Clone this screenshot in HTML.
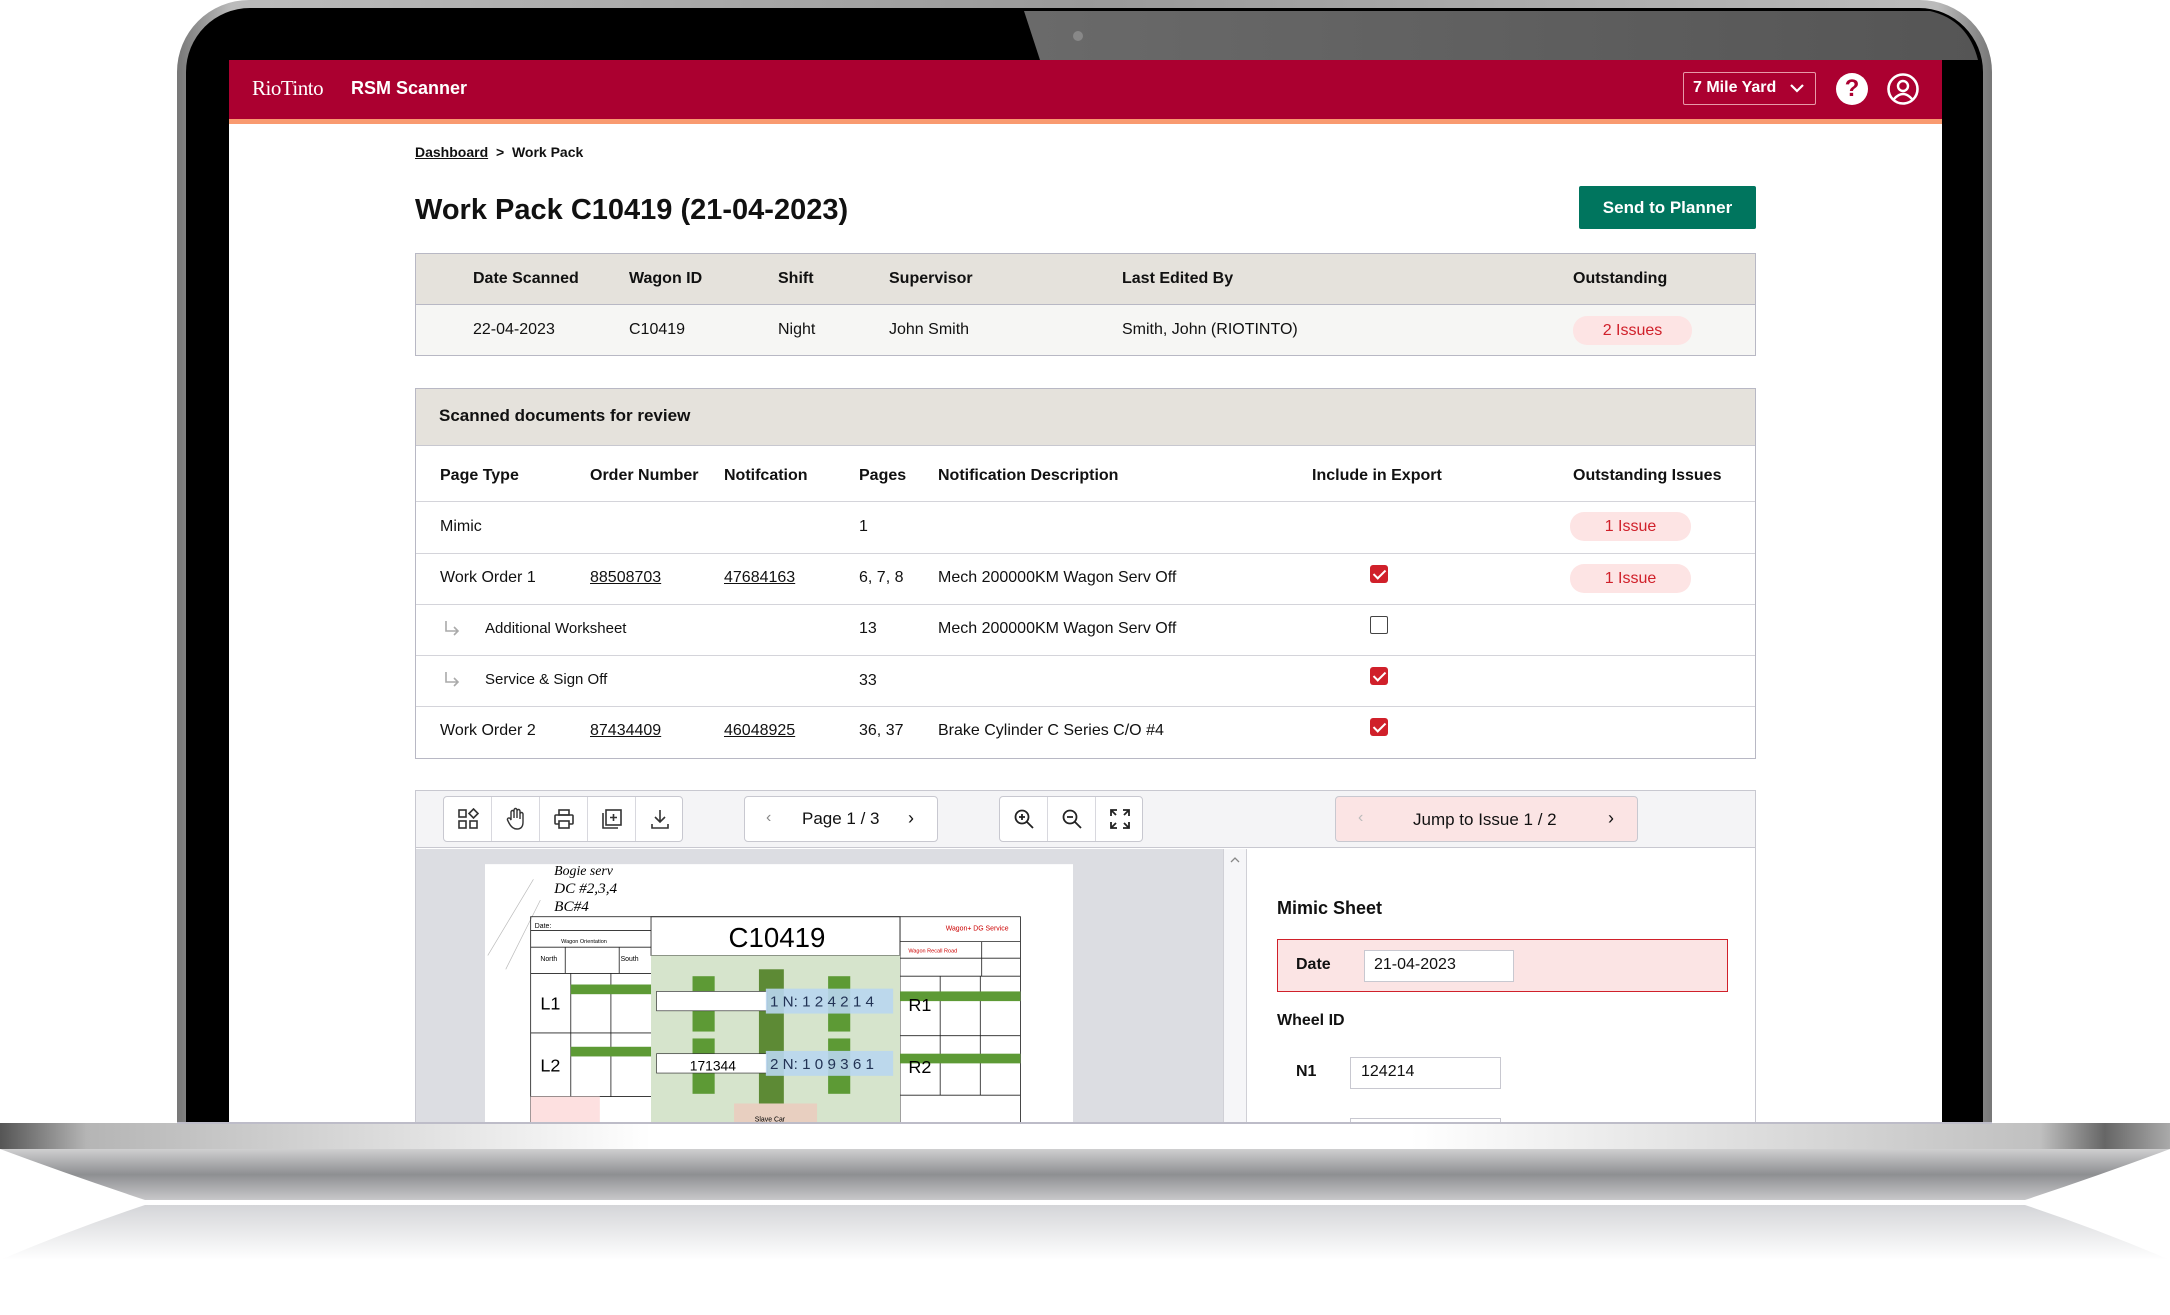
<!DOCTYPE html>
<html><head><meta charset="utf-8"><style>
*{box-sizing:border-box;margin:0;padding:0}
body{width:2170px;height:1315px;position:relative;background:#fff;font-family:"Liberation Sans",sans-serif;color:#111;overflow:hidden}
.a{position:absolute}
.t{position:absolute;white-space:nowrap;font-size:16px}
.b{font-weight:bold}
.badge{position:absolute;background:#fde4e4;color:#d0202a;border-radius:14px;font-size:16px;text-align:center;line-height:29px;height:29px}
.u{text-decoration:underline}
.cb{position:absolute;width:18px;height:18px;border-radius:3px;background:#d0202a}
.cb:after{content:"";position:absolute;left:6px;top:2px;width:5px;height:10px;border:solid #fff;border-width:0 2px 2px 0;transform:rotate(45deg)}
.grp{position:absolute;border:1px solid #c8c8d0;border-radius:4px;background:#fff;height:46px;top:796px}
.ic{position:absolute;top:0;height:44px;width:48px;border-right:1px solid #d8d8de;display:flex;align-items:center;justify-content:center}
</style></head><body>
<!-- laptop outer -->
<div class="a" style="left:177px;top:0;width:1815px;height:1140px;border-radius:72px 72px 0 0;background:linear-gradient(90deg,#777,#bbb 3%,#999 50%,#bbb 97%,#777)"></div>
<div class="a" style="left:186px;top:8px;width:1797px;height:1130px;border-radius:64px 64px 0 0;background:#000"></div>
<svg class="a" style="left:0;top:0" width="2170" height="70"><defs><linearGradient id="g1" x1="0" x2="1"><stop offset="0" stop-color="#6a6a6a"/><stop offset="1" stop-color="#555"/></linearGradient></defs><path d="M1024 11 L1930 11 Q1968 20 1978 60 L1040 60 Z" fill="url(#g1)"/><circle cx="1078" cy="36" r="5" fill="#888"/></svg>
<!-- screen -->
<div class="a" style="left:229px;top:60px;width:1713px;height:1063px;background:#fff;overflow:hidden">
 <div class="a" style="left:0;top:0;width:1713px;height:59px;background:#ab0030"></div>
 <div class="a" style="left:0;top:59px;width:1713px;height:5px;background:#f99a70"></div>
</div>
<div class="t" style="left:252px;top:76px;color:#fff;font-family:'Liberation Serif',serif;font-size:21px;letter-spacing:-0.5px">RioTinto</div>
<div class="t b" style="left:351px;top:78px;color:#fff;font-size:18px">RSM Scanner</div>
<div class="a" style="left:1683px;top:72px;width:133px;height:33px;border:1px solid #e79aa8;border-radius:2px"></div>
<div class="t b" style="left:1693px;top:79px;color:#fff;font-size:16px">7 Mile Yard</div>
<svg class="a" style="left:1788px;top:80px" width="18" height="16"><path d="M3 5 L9 11 L15 5" stroke="#fff" stroke-width="2.2" fill="none"/></svg>
<div class="a" style="left:1836px;top:73px;width:32px;height:32px;border-radius:50%;background:#fff;color:#ab0030;font-weight:bold;font-size:24px;text-align:center;line-height:32px">?</div>
<svg class="a" style="left:1886px;top:72px" width="34" height="34"><circle cx="17" cy="17" r="14.5" stroke="#fff" stroke-width="2.6" fill="none"/><circle cx="17" cy="14" r="5" stroke="#fff" stroke-width="2.4" fill="none"/><path d="M8 27 Q17 17 26 27" stroke="#fff" stroke-width="2.4" fill="none"/></svg>

<div class="t b u" style="left:415px;top:144px;font-size:14px">Dashboard</div>
<div class="t b" style="left:496px;top:144px;font-size:14px">&gt;&nbsp; Work Pack</div>
<div class="t b" style="left:415px;top:194px;font-size:29px">Work Pack C10419 (21-04-2023)</div>
<div class="a" style="left:1579px;top:186px;width:177px;height:43px;background:#00755e;border-radius:2px;color:#fff;font-size:17px;font-weight:bold;text-align:center;line-height:43px">Send to Planner</div>

<!-- table 1 -->
<div class="a" style="left:415px;top:253px;width:1341px;height:103px;border:1px solid #b8b8c4;background:#f6f6f4"></div>
<div class="a" style="left:416px;top:254px;width:1339px;height:51px;background:#e5e2dc;border-bottom:1px solid #b8b8c4"></div>
<div class="t b" style="left:473px;top:270px">Date Scanned</div>
<div class="t b" style="left:629px;top:270px">Wagon ID</div>
<div class="t b" style="left:778px;top:270px">Shift</div>
<div class="t b" style="left:889px;top:270px">Supervisor</div>
<div class="t b" style="left:1122px;top:270px">Last Edited By</div>
<div class="t b" style="left:1573px;top:270px">Outstanding</div>
<div class="t" style="left:473px;top:321px">22-04-2023</div>
<div class="t" style="left:629px;top:321px">C10419</div>
<div class="t" style="left:778px;top:321px">Night</div>
<div class="t" style="left:889px;top:321px">John Smith</div>
<div class="t" style="left:1122px;top:321px">Smith, John (RIOTINTO)</div>
<div class="badge" style="left:1573px;top:316px;width:119px">2 Issues</div>

<!-- table 2 -->
<div class="a" style="left:415px;top:388px;width:1341px;height:371px;border:1px solid #b8b8c4;background:#fff"></div>
<div class="a" style="left:416px;top:389px;width:1339px;height:57px;background:#e5e2dc;border-bottom:1px solid #c8c8d0"></div>
<div class="t b" style="left:439px;top:406px;font-size:17px">Scanned documents for review</div>
<div class="t b" style="left:440px;top:467px">Page Type</div>
<div class="t b" style="left:590px;top:467px">Order Number</div>
<div class="t b" style="left:724px;top:467px">Notifcation</div>
<div class="t b" style="left:859px;top:467px">Pages</div>
<div class="t b" style="left:938px;top:467px">Notification Description</div>
<div class="t b" style="left:1312px;top:467px">Include in Export</div>
<div class="t b" style="left:1573px;top:467px">Outstanding Issues</div>
<div class="a" style="left:416px;top:501px;width:1339px;height:1px;background:#d4d4da"></div>
<div class="a" style="left:416px;top:553px;width:1339px;height:1px;background:#d4d4da"></div>
<div class="a" style="left:416px;top:604px;width:1339px;height:1px;background:#d4d4da"></div>
<div class="a" style="left:416px;top:655px;width:1339px;height:1px;background:#d4d4da"></div>
<div class="a" style="left:416px;top:706px;width:1339px;height:1px;background:#d4d4da"></div>
<div class="t" style="left:440px;top:518px">Mimic</div>
<div class="t" style="left:859px;top:518px">1</div>
<div class="badge" style="left:1570px;top:512px;width:121px">1 Issue</div>
<div class="t" style="left:440px;top:569px">Work Order 1</div>
<div class="t u" style="left:590px;top:569px">88508703</div>
<div class="t u" style="left:724px;top:569px">47684163</div>
<div class="t" style="left:859px;top:569px">6, 7, 8</div>
<div class="t" style="left:938px;top:569px">Mech 200000KM Wagon Serv Off</div>
<div class="cb" style="left:1370px;top:565px"></div>
<div class="badge" style="left:1570px;top:564px;width:121px">1 Issue</div>
<svg class="a" style="left:443px;top:619px" width="18" height="18"><path d="M3 2 V12 H15 M11 8 L15 12 L11 16" stroke="#aaa" stroke-width="1.6" fill="none"/></svg>
<div class="t" style="left:485px;top:620px;font-size:15px">Additional Worksheet</div>
<div class="t" style="left:859px;top:620px">13</div>
<div class="t" style="left:938px;top:620px">Mech 200000KM Wagon Serv Off</div>
<div class="a" style="left:1370px;top:616px;width:18px;height:18px;border:1.5px solid #444;border-radius:2px"></div>
<svg class="a" style="left:443px;top:670px" width="18" height="18"><path d="M3 2 V12 H15 M11 8 L15 12 L11 16" stroke="#aaa" stroke-width="1.6" fill="none"/></svg>
<div class="t" style="left:485px;top:671px;font-size:15px">Service &amp; Sign Off</div>
<div class="t" style="left:859px;top:672px">33</div>
<div class="cb" style="left:1370px;top:667px"></div>
<div class="t" style="left:440px;top:722px">Work Order 2</div>
<div class="t u" style="left:590px;top:722px">87434409</div>
<div class="t u" style="left:724px;top:722px">46048925</div>
<div class="t" style="left:859px;top:722px">36, 37</div>
<div class="t" style="left:938px;top:722px">Brake Cylinder C Series C/O #4</div>
<div class="cb" style="left:1370px;top:718px"></div>

<!-- viewer -->
<div class="a" style="left:415px;top:790px;width:1341px;height:340px;border:1px solid #c8c8d0;background:#fff"></div>
<div class="a" style="left:416px;top:791px;width:1339px;height:57px;background:#f4f4f6;border-bottom:1px solid #c8c8d0"></div>
<div class="grp" style="left:443px;width:240px">
 <div class="ic" style="left:0"><svg width="22" height="22"><rect x="2" y="2" width="7" height="7" fill="none" stroke="#333" stroke-width="1.6"/><rect x="2" y="13" width="7" height="7" fill="none" stroke="#333" stroke-width="1.6"/><rect x="13" y="13" width="7" height="7" fill="none" stroke="#333" stroke-width="1.6"/><path d="M16.5 1 L21 5.5 L16.5 10 L12 5.5Z" fill="none" stroke="#333" stroke-width="1.6"/></svg></div>
 <div class="ic" style="left:48px"><svg width="22" height="24"><path d="M6 13 V5 a1.5 1.5 0 0 1 3 0 V11 V3 a1.5 1.5 0 0 1 3 0 V11 V4 a1.5 1.5 0 0 1 3 0 V12 V7 a1.5 1.5 0 0 1 3 0 V15 Q18 22 12 22 Q7 22 4 16 L2.5 13 a1.5 1.5 0 0 1 3-1Z" fill="none" stroke="#333" stroke-width="1.4"/></svg></div>
 <div class="ic" style="left:96px"><svg width="22" height="22"><rect x="6" y="2" width="10" height="5" fill="none" stroke="#333" stroke-width="1.6"/><rect x="2" y="7" width="18" height="9" rx="1" fill="none" stroke="#333" stroke-width="1.6"/><rect x="6" y="13" width="10" height="7" fill="#fff" stroke="#333" stroke-width="1.6"/></svg></div>
 <div class="ic" style="left:144px"><svg width="22" height="22"><rect x="5" y="2" width="15" height="15" fill="none" stroke="#333" stroke-width="1.6"/><path d="M2 5 V20 H17 M12.5 6 V13 M9 9.5 H16" stroke="#333" stroke-width="1.6" fill="none"/></svg></div>
 <div class="ic" style="left:192px;border:none"><svg width="22" height="22"><path d="M11 2 V14 M6 9 L11 14 L16 9 M3 16 V20 H19 V16" stroke="#333" stroke-width="1.6" fill="none"/></svg></div>
</div>
<div class="grp" style="left:744px;width:194px">
 <div class="t" style="left:21px;top:12px;color:#888">&#8249;</div>
 <div class="t" style="left:57px;top:12px;font-size:17px">Page 1 / 3</div>
 <div class="t" style="left:163px;top:11px;font-size:18px">&#8250;</div>
</div>
<div class="grp" style="left:999px;width:144px">
 <div class="ic" style="left:0"><svg width="22" height="22"><circle cx="9" cy="9" r="6.5" fill="none" stroke="#222" stroke-width="1.8"/><path d="M14 14 L20 20 M9 6 V12 M6 9 H12" stroke="#222" stroke-width="1.8"/></svg></div>
 <div class="ic" style="left:48px"><svg width="22" height="22"><circle cx="9" cy="9" r="6.5" fill="none" stroke="#222" stroke-width="1.8"/><path d="M14 14 L20 20 M6 9 H12" stroke="#222" stroke-width="1.8"/></svg></div>
 <div class="ic" style="left:96px;border:none"><svg width="22" height="22"><path d="M2 8 V2 H8 M14 2 H20 V8 M20 14 V20 H14 M8 20 H2 V14 M2 2 L7 7 M20 2 L15 7 M20 20 L15 15 M2 20 L7 15" stroke="#222" stroke-width="1.8" fill="none"/></svg></div>
</div>
<div class="grp" style="left:1335px;width:303px;background:#fbe4e4">
 <div class="t" style="left:22px;top:12px;color:#bbb">&#8249;</div>
 <div class="t" style="left:77px;top:13px;font-size:17px">Jump to Issue 1 / 2</div>
 <div class="t" style="left:272px;top:11px;font-size:18px">&#8250;</div>
</div>
<div class="a" style="left:416px;top:849px;width:807px;height:280px;background:#dcdde2"></div>
<div class="a" style="left:1223px;top:849px;width:24px;height:280px;background:#f6f6f8;border-left:1px solid #d0d0d6;border-right:1px solid #d0d0d6"></div>
<svg class="a" style="left:1228px;top:854px" width="14" height="12"><path d="M3 8 L7 4 L11 8" stroke="#888" stroke-width="1.3" fill="none"/></svg>
<svg class="a" style="left:485px;top:864px" width="588" height="259" viewBox="350 624 425 187">
 <rect x="350" y="624" width="425" height="187" fill="#fff"/>
 <path d="M352 690 L385 635 M365 700 L390 650" stroke="#bbb" stroke-width="0.5"/>
 <text x="400" y="632" font-family="Liberation Serif" font-style="italic" font-size="10">Bogie serv</text>
 <text x="400" y="645" font-family="Liberation Serif" font-style="italic" font-size="11">DC #2,3,4</text>
 <text x="400" y="658" font-family="Liberation Serif" font-style="italic" font-size="11">BC#4</text>
 <g fill="none" stroke="#222" stroke-width="0.6">
  <rect x="383" y="662" width="354" height="149"/>
  <rect x="470" y="662" width="180" height="28"/>
  <path d="M383 672 H470 M383 684 H470 M383 703 H470 M383 746 H470 M383 792 H470 M412 703 V792 M441 703 V792 M650 662 V811 M650 680 H737 M650 692 H737 M650 705 H737 M650 748 H737 M650 791 H737 M679 705 V791 M708 705 V791 M709 680 V705 M408 684 V703 M447 684 V703"/>
 </g>
 <rect x="470" y="690" width="180" height="121" fill="#d6e4cc"/>
 <rect x="548" y="700" width="18" height="111" fill="#5d8a35"/>
 <g fill="#5d9a35"><rect x="500" y="705" width="16" height="40"/><rect x="598" y="705" width="16" height="40"/><rect x="500" y="750" width="16" height="40"/><rect x="598" y="750" width="16" height="40"/>
 <rect x="412" y="711" width="58" height="7"/><rect x="412" y="756" width="58" height="7"/><rect x="650" y="716" width="87" height="7"/><rect x="650" y="761" width="87" height="7"/></g>
 <rect x="474" y="716" width="80" height="14" fill="#fff" stroke="#333" stroke-width="0.5"/>
 <rect x="474" y="761" width="80" height="14" fill="#fff" stroke="#333" stroke-width="0.5"/>
 <rect x="553" y="714" width="92" height="18" fill="#b9d6f0" opacity="0.9"/>
 <rect x="553" y="759" width="92" height="18" fill="#b9d6f0" opacity="0.9"/>
 <rect x="383" y="792" width="50" height="19" fill="#fde0e0"/>
 <rect x="530" y="797" width="60" height="14" fill="#e8cfc0"/>
 <text x="561" y="684" font-size="20" text-anchor="middle" font-family="Liberation Sans">C10419</text>
 <text x="390" y="729" font-size="13" font-family="Liberation Sans">L1</text>
 <text x="390" y="774" font-size="13" font-family="Liberation Sans">L2</text>
 <text x="656" y="730" font-size="13" font-family="Liberation Sans">R1</text>
 <text x="656" y="775" font-size="13" font-family="Liberation Sans">R2</text>
 <text x="498" y="773" font-size="10" font-family="Liberation Sans">171344</text>
 <text x="556" y="727" font-size="11" fill="#235" font-family="Liberation Sans">1 N: 1 2 4 2 1 4</text>
 <text x="556" y="772" font-size="11" fill="#235" font-family="Liberation Sans">2 N: 1 0 9 3 6 1</text>
 <text x="683" y="672" font-size="5" fill="#c00" font-family="Liberation Sans">Wagon+ DG Service</text>
 <text x="656" y="688" font-size="4" fill="#c00" font-family="Liberation Sans">Wagon Recall Road</text>
 <text x="386" y="670" font-size="5" font-family="Liberation Sans">Date:</text>
 <text x="405" y="681" font-size="4" font-family="Liberation Sans">Wagon Orientation</text>
 <text x="390" y="694" font-size="5" font-family="Liberation Sans">North</text>
 <text x="448" y="694" font-size="5" font-family="Liberation Sans">South</text>
 <text x="545" y="810" font-size="5" font-family="Liberation Sans">Slave Car</text>
</svg>
<div class="t b" style="left:1277px;top:898px;font-size:18px">Mimic Sheet</div>
<div class="a" style="left:1277px;top:939px;width:451px;height:53px;background:#fbe4e4;border:1.5px solid #d0202a"></div>
<div class="t b" style="left:1296px;top:956px">Date</div>
<div class="a" style="left:1364px;top:950px;width:150px;height:32px;background:#fff;border:1px solid #c8c8d0"></div>
<div class="t" style="left:1374px;top:956px">21-04-2023</div>
<div class="t b" style="left:1277px;top:1012px">Wheel ID</div>
<div class="t b" style="left:1296px;top:1063px">N1</div>
<div class="a" style="left:1350px;top:1057px;width:151px;height:32px;background:#fff;border:1px solid #c8c8d0"></div>
<div class="t" style="left:1361px;top:1063px">124214</div>
<div class="a" style="left:1350px;top:1118px;width:151px;height:10px;border:1px solid #c8c8d0;border-bottom:none"></div>
<!-- base -->
<svg class="a" style="left:0;top:1120px" width="2170" height="195">
 <defs>
  <linearGradient id="h" x1="0" x2="1"><stop offset="0" stop-color="#555"/><stop offset="0.04" stop-color="#b5b5b5"/><stop offset="0.3" stop-color="#fff"/><stop offset="0.65" stop-color="#fff"/><stop offset="0.94" stop-color="#c0c0c0"/><stop offset="0.97" stop-color="#666"/><stop offset="1" stop-color="#aaa"/></linearGradient>
  <linearGradient id="v" x1="0" y1="0" x2="0" y2="1"><stop offset="0" stop-color="#cfcfd0"/><stop offset="0.5" stop-color="#8e8f92"/><stop offset="1" stop-color="#c8c8ca"/></linearGradient>
  <linearGradient id="r" x1="0" y1="0" x2="0" y2="1"><stop offset="0" stop-color="#d4d5d8"/><stop offset="1" stop-color="#fff"/></linearGradient>
 </defs>
 <rect x="0" y="3" width="2170" height="26" fill="url(#h)"/>
 <rect x="177" y="2" width="1815" height="2" fill="#bdbcc8"/>
 <path d="M0 29 H2170 Q2100 55 2025 80 H145 Q70 55 0 29Z" fill="url(#v)"/>
 <path d="M145 85 H2025 Q2100 110 2170 140 H0 Q70 110 145 85Z" fill="url(#r)"/>
</svg>
</body></html>
